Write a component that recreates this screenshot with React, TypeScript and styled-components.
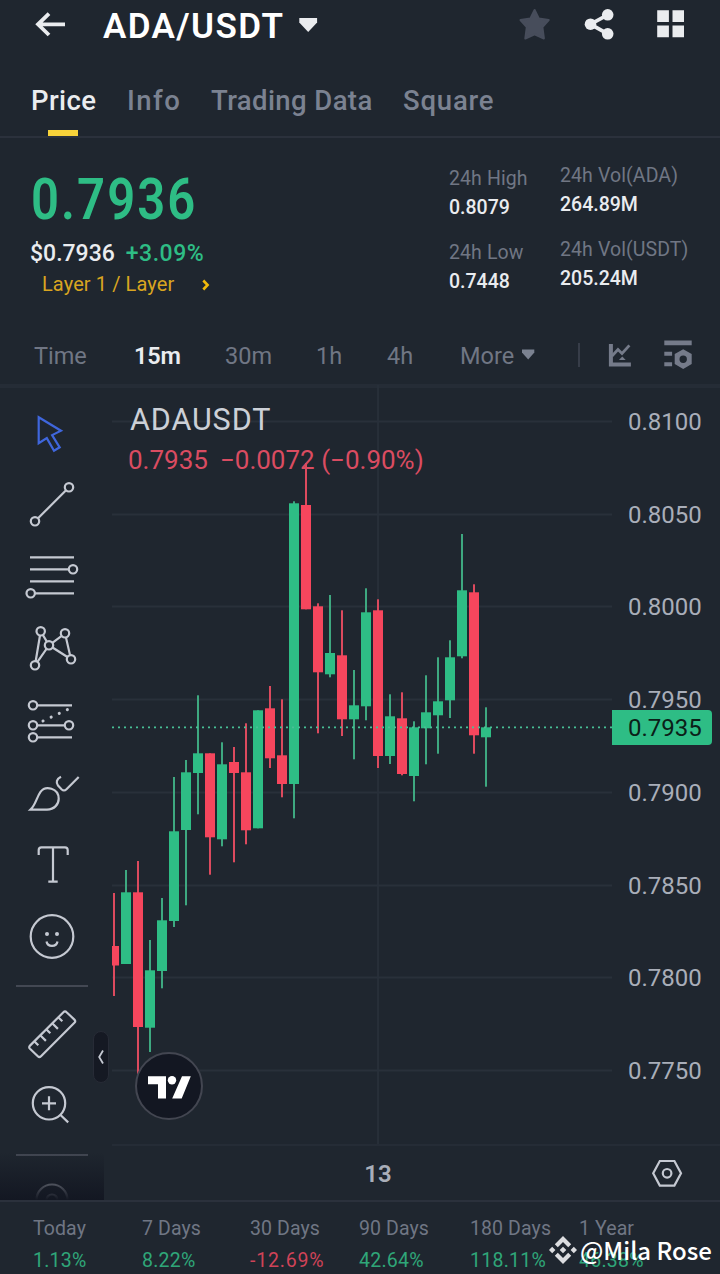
import React from "react";
import styled, { createGlobalStyle } from "styled-components";

const c = {
  bg: "#1f262f",
  line: "#2b313c",
  grid: "#29303a",
  text: "#eaecef",
  muted: "#7b8291",
  dim: "#707684",
  green: "#2ebd85",
  red: "#f6465d",
  yellow: "#f8d33a",
  gold: "#d9a520",
  tool: "#c5c9d2",
  axis: "#a9aeb9",
  deep: "#131722",
};

const GlobalStyle = createGlobalStyle`
  * { box-sizing: border-box; }
  body { margin: 0; background: ${c.bg}; }
`;

const Screen = styled.main`
  width: 720px;
  height: 1274px;
  overflow: hidden;
  position: relative;
  display: flex;
  flex-direction: column;
  background: ${c.bg};
  color: ${c.text};
  font-family: Roboto, "Liberation Sans", sans-serif;
  white-space: nowrap;
`;

const Icon = styled.svg`
  display: block;
  flex: none;
  overflow: visible;
`;

/* ---------- header ---------- */

const Header = styled.header`
  height: 52px;
  flex: none;
  display: flex;
  align-items: center;
  padding: 0 35px;
`;

const BackIcon = styled(Icon)`
  margin-bottom: 4px;
`;

const Pair = styled.h1`
  margin: 2px 13px 0 38px;
  width: 183px;
  font-size: 35px;
  line-height: 50px;
  font-weight: 600;
  color: #fff;
  letter-spacing: 1.4px;
`;

const CaretIcon = styled(Icon)`
  margin-bottom: 3px;
`;

const HeaderActions = styled.div`
  margin-left: auto;
  display: flex;
  align-items: center;
  gap: 35px;
  padding-bottom: 4px;
`;

const ShareIcon = styled(Icon)`
  margin-right: 7px;
`;

const Tabs = styled.nav`
  height: 86px;
  flex: none;
  display: flex;
  align-items: flex-end;
  padding-left: 31px;
  border-bottom: 2px solid ${c.line};
`;

const Tab = styled.div<{ $active?: boolean; $width: number; $ls?: number }>`
  position: relative;
  width: ${(p) => p.$width}px;
  height: 72px;
  line-height: 74px;
  font-size: 27.5px;
  font-weight: 500;
  letter-spacing: ${(p) => p.$ls ?? 0.4}px;
  color: ${(p) => (p.$active ? c.text : c.muted)};
`;

const TabMark = styled.i`
  position: absolute;
  left: 17px;
  bottom: 0;
  width: 30px;
  height: 6px;
  background: ${c.yellow};
`;

/* ---------- price summary ---------- */

const Summary = styled.section`
  height: 188px;
  flex: none;
  display: flex;
  padding: 23px 0 0 31px;
`;

const PriceBlock = styled.div`
  width: 418px;
  padding-top: 8px;
`;

const BigPrice = styled.div`
  height: 62px;
  line-height: 61px;
  font-size: 57px;
  font-weight: 600;
  color: ${c.green};
  letter-spacing: 2.4px;
  transform: scaleX(0.86);
  transform-origin: left center;
`;

const FiatRow = styled.div`
  margin: 8px 0 0 -1px;
  height: 30px;
  display: flex;
  gap: 11px;
  line-height: 30px;
  font-size: 23px;
  font-weight: 500;
`;

const Change = styled.span`
  color: ${c.green};
  letter-spacing: 0.5px;
`;

const Category = styled.div`
  margin-top: 1px;
  padding-left: 11px;
  height: 29px;
  display: flex;
  align-items: center;
  gap: 29px;
  font-size: 20px;
  line-height: 29px;
  color: ${c.gold};
  letter-spacing: 0.1px;
`;

const StatColumn = styled.div<{ $width: number; $top: number }>`
  width: ${(p) => p.$width}px;
  padding-top: ${(p) => p.$top}px;
  display: flex;
  flex-direction: column;
  gap: 16px;
`;

const StatLabel = styled.div`
  height: 29px;
  line-height: 29px;
  font-size: 19.5px;
  letter-spacing: 0.1px;
  color: ${c.dim};
`;

const StatValue = styled.div`
  height: 29px;
  line-height: 29px;
  font-size: 19.5px;
  font-weight: 500;
`;

/* ---------- intervals ---------- */

const Intervals = styled.div`
  height: 62px;
  flex: none;
  display: grid;
  grid-template-columns: 100px 91px 91px 71px 73px 118px 31px 55px 30px;
  align-items: center;
  padding-left: 34px;
  border-bottom: 4px solid #252c36;
`;

const Interval = styled.div<{ $active?: boolean }>`
  display: flex;
  align-items: center;
  gap: 9px;
  padding-top: 3px;
  line-height: 55px;
  font-size: 23.5px;
  font-weight: ${(p) => (p.$active ? 600 : 400)};
  letter-spacing: ${(p) => (p.$active ? -0.2 : 0)}px;
  color: ${(p) => (p.$active ? c.text : c.dim)};
`;

const MoreIcon = styled(Icon)`
  margin: -3px 0 0 -1px;
`;

const Divider = styled.i`
  width: 2px;
  height: 24px;
  background: #373d49;
`;

/* ---------- workspace ---------- */

const Workspace = styled.section`
  height: 812px;
  flex: none;
  display: flex;
  position: relative;
`;

const Toolbar = styled.aside`
  position: relative;
  width: 104px;
  height: 812px;
  overflow: hidden;
  padding: 9px 16px 0;
  display: flex;
  flex-direction: column;
`;

const ToolSlot = styled(Icon)`
  width: 72px;
  height: 72px;
  fill: none;
  stroke-width: 2.2;
`;

const ToolRule = styled.hr`
  flex: none;
  width: 72px;
  height: 2px;
  margin: 11.5px 0;
  border: 0;
  background: #434853;
`;

const ToolbarFade = styled.div`
  position: absolute;
  left: 0;
  right: 0;
  bottom: 0;
  height: 48px;
  background: linear-gradient(rgba(19, 23, 34, 0), ${c.deep});
`;

const ChartColumn = styled.div`
  width: 508px;
  display: flex;
  flex-direction: column;
`;

const Plot = styled(Icon)`
  width: 508px;
  height: 756px;
`;

const TimeAxis = styled.div`
  height: 56px;
  margin-left: 8px;
  border-top: 2px solid #252c36;
  padding-left: 32px;
  text-align: center;
  line-height: 56px;
  font-size: 24px;
  font-weight: 600;
  color: ${c.axis};
`;

const PriceColumn = styled.div`
  width: 108px;
  display: flex;
  flex-direction: column;
`;

const PriceScale = styled.div`
  height: 756px;
  padding: 11px 0 0 16px;
  display: grid;
  grid-auto-rows: 92.73px;
`;

const PriceTick = styled.div`
  font-size: 24px;
  line-height: 46px;
  color: ${c.axis};
`;

const AxisCorner = styled.div`
  height: 56px;
  border-top: 2px solid #252c36;
  padding: 0 0 0 40px;
  display: flex;
  align-items: center;
`;

const LastPrice = styled.div`
  position: absolute;
  left: 612px;
  top: 322px;
  width: 100px;
  height: 35px;
  padding-left: 16px;
  border-radius: 0 4px 4px 0;
  background: ${c.green};
  color: #0b2018;
  font-size: 24px;
  line-height: 36px;
`;

const Legend = styled.div`
  position: absolute;
  left: 128px;
  top: 10px;
`;

const Symbol = styled.div`
  padding-left: 2px;
  height: 41px;
  line-height: 43px;
  font-size: 30.5px;
  letter-spacing: 0.9px;
  color: #ccd0d7;
`;

const LegendChange = styled.div`
  display: flex;
  gap: 12px;
  height: 42px;
  line-height: 43px;
  font-size: 26px;
  color: #da4c61;
`;

const CollapseHandle = styled.div`
  position: absolute;
  left: 93px;
  top: 643px;
  width: 16px;
  height: 52px;
  border-radius: 8px;
  border: 1px solid #272b36;
  background: #151923;
  display: flex;
  align-items: center;
  justify-content: center;
`;

const BrandBadge = styled.div`
  position: absolute;
  left: 135px;
  top: 664px;
  width: 68px;
  height: 68px;
  border-radius: 50%;
  border: 2px solid #434651;
  background: ${c.deep};
  display: flex;
  align-items: center;
  justify-content: center;
  padding-top: 3px;
`;

/* ---------- performance ---------- */

const Performance = styled.footer`
  flex: 1;
  display: grid;
  grid-template-columns: 109px 108px 109px 111px 109px 120px;
  padding: 11px 0 0 33px;
  border-top: 2px solid ${c.line};
`;

const Period = styled.div`
  height: 32px;
  line-height: 32px;
  font-size: 19.5px;
  letter-spacing: 0.1px;
  color: ${c.dim};
`;

const PeriodValue = styled.div<{ $down?: boolean }>`
  height: 32px;
  line-height: 32px;
  font-size: 19.5px;
  letter-spacing: ${(p) => (p.$down ? 0.8 : 0.25)}px;
  color: ${(p) => (p.$down ? "#d04358" : "#2fa679")};
`;

const Credit = styled.div`
  position: absolute;
  left: 549px;
  top: 1231px;
  height: 37px;
  display: flex;
  align-items: center;
  gap: 3px;
  color: #fff;
  font-family: "Noto Sans CJK SC", "Noto Sans", sans-serif;
  font-size: 24px;
  font-weight: 500;
  line-height: 36px;
`;

/* ---------- data ---------- */

// [wick top, body top, body bottom, wick bottom, rising]
const candles: [number, number, number, number, boolean][] = [
  [893, 946, 965.5, 996, false],
  [870, 892.3, 964, 964, true],
  [861, 892.3, 1027, 1074, false],
  [940, 970.3, 1027.7, 1052, true],
  [898, 920.3, 971, 988.3, true],
  [777, 831.3, 921, 927, true],
  [760, 772.3, 830, 905.3, true],
  [695.3, 753.3, 773, 814.3, true],
  [753.3, 753.3, 837.3, 874.7, false],
  [742.3, 764.3, 839.3, 846.3, true],
  [747, 762, 773, 862.3, false],
  [723.3, 772.3, 830.3, 844.3, false],
  [710.3, 710.3, 828.3, 828.3, true],
  [686, 708.3, 758.3, 768, false],
  [699.3, 755.3, 784, 797.3, false],
  [501.3, 503.3, 784, 818.3, true],
  [463, 505, 609.3, 609.3, false],
  [603.3, 606.3, 672.3, 733.3, false],
  [595, 653, 674.3, 677.3, true],
  [610.3, 655.3, 719.3, 736, false],
  [670, 705.3, 719.3, 759.3, true],
  [588.3, 612.3, 706.3, 720.3, true],
  [599.3, 610.3, 756, 768, false],
  [694.3, 716.3, 756, 764, true],
  [692.3, 718.3, 774, 775.3, false],
  [721.3, 727.3, 776, 801.3, true],
  [675.3, 712.3, 728.3, 764.3, true],
  [657.3, 701.3, 715.3, 753.7, true],
  [640.3, 657.3, 700.3, 718, true],
  [534, 590.3, 656.3, 658.3, true],
  [584.3, 592.3, 735.3, 753.7, false],
  [707.3, 727.3, 737.3, 786.7, true],
];

const ticks = ["0.8100", "0.8050", "0.8000", "0.7950", "0.7900", "0.7850", "0.7800", "0.7750"];
const gridLines = [421.5, 514.5, 606.5, 699.5, 792.5, 885.5, 977.5, 1070.5];

const periods: [string, string, boolean?][] = [
  ["Today", "1.13%"],
  ["7 Days", "8.22%"],
  ["30 Days", "-12.69%", true],
  ["90 Days", "42.64%"],
  ["180 Days", "118.11%"],
  ["1 Year", "46.38%"],
];

/* ---------- parts ---------- */

const Stat = ({ label, value }: { label: string; value: string }) => (
  <div>
    <StatLabel>{label}</StatLabel>
    <StatValue>{value}</StatValue>
  </div>
);

const Tool = ({ children, stroke }: { children: React.ReactNode; stroke?: string }) => (
  <ToolSlot viewBox="0 0 72 72">
    <g stroke={stroke ?? c.tool}>{children}</g>
  </ToolSlot>
);

const Node = ({ x, y }: { x: number; y: number }) => <circle cx={x} cy={y} r="4.2" fill={c.bg} />;

const CandlePlot = () => (
  <Plot viewBox="104 388 508 756">
    <g stroke={c.grid} strokeWidth="1.8">
      {gridLines.map((y) => (
        <line key={y} x1="112" x2="612" y1={y} y2={y} />
      ))}
      <line x1="378" x2="378" y1="385" y2="1144" />
    </g>
    <clipPath id="plot-area">
      <rect x="112" y="388" width="500" height="756" />
    </clipPath>
    <g clipPath="url(#plot-area)">
      {candles.map(([high, top, bottom, low, up], i) => {
        const x = 114 + i * 12;
        return (
          <g key={x}>
            <rect x={x - 1} y={high} width="2" height={low - high} fill={up ? "#3ea880" : "#dc4a5e"} />
            <rect x={x - 5} y={top} width="10" height={bottom - top} fill={up ? c.green : c.red} />
          </g>
        );
      })}
    </g>
    <line x1="112" x2="612" y1="727.3" y2="727.3" stroke="#48c096" strokeWidth="1.8" strokeDasharray="2 4" />
  </Plot>
);

export default function App() {
  return (
    <Screen>
      <GlobalStyle />
      <Header>
        <BackIcon width="30" height="24" viewBox="35 12 30 24" fill="none" stroke={c.text} strokeWidth="3.8">
          <path d="M65 24.3H38M49 13.6 38 24.3 49 35" />
        </BackIcon>
        <Pair>ADA/USDT</Pair>
        <CaretIcon width="18" height="14" viewBox="299 16 18 14" fill={c.text}>
          <path d="M299.3 16h17.8v4.4L308.2 30l-8.9-9.6z" />
        </CaretIcon>
        <HeaderActions>
          <Icon width="31" height="32" viewBox="519 8 31 32" fill="#474d5b" stroke="#474d5b" strokeWidth="2" strokeLinejoin="round">
            <path d="M534.6 10l4.3 8.6 9.8 1.4-6.3 7.2 1.5 11.3-9.3-4.2-9.3 4.2 1.5-11.3-6.3-7.2 9.8-1.4z" />
          </Icon>
          <ShareIcon width="30" height="32" viewBox="585 8 30 32" fill={c.text} stroke={c.text}>
            <g stroke="none">
              <circle cx="590.5" cy="24.2" r="5.8" />
              <circle cx="607.7" cy="14.8" r="5.8" />
              <circle cx="607.7" cy="33.8" r="5.8" />
            </g>
            <path d="M607.7 14.8 590.5 24.2l17.2 9.6" fill="none" strokeWidth="3.8" />
          </ShareIcon>
          <Icon width="28" height="28" viewBox="656.5 10.7 28 28" fill={c.text}>
            <path d="M656.7 11h11.7v11.7h-11.7zM672 11h11.5v11.7H672zM656.7 26.3h11.7V38h-11.7zM672 26.3h11.5V38H672z" />
          </Icon>
        </HeaderActions>
      </Header>

      <Tabs>
        <Tab $active $width={96}>
          Price
          <TabMark />
        </Tab>
        <Tab $width={84} $ls={1.5}>
          Info
        </Tab>
        <Tab $width={192}>Trading Data</Tab>
        <Tab $width={120} $ls={0.8}>
          Square
        </Tab>
      </Tabs>

      <Summary>
        <PriceBlock>
          <BigPrice>0.7936</BigPrice>
          <FiatRow>
            <span>$0.7936</span>
            <Change>+3.09%</Change>
          </FiatRow>
          <Category>
            Layer 1 / Layer
            <Icon width="6" height="10" viewBox="0 0 6 10" fill="none" stroke="#f0b90b" strokeWidth="2.6">
              <path d="M.3.5 4.6 5 .3 9.5" />
            </Icon>
          </Category>
        </PriceBlock>
        <StatColumn $width={111} $top={3}>
          <Stat label="24h High" value="0.8079" />
          <Stat label="24h Low" value="0.7448" />
        </StatColumn>
        <StatColumn $width={140} $top={0}>
          <Stat label="24h Vol(ADA)" value="264.89M" />
          <Stat label="24h Vol(USDT)" value="205.24M" />
        </StatColumn>
      </Summary>

      <Intervals>
        <Interval>Time</Interval>
        <Interval $active>15m</Interval>
        <Interval>30m</Interval>
        <Interval>1h</Interval>
        <Interval>4h</Interval>
        <Interval>
          More
          <MoreIcon width="12" height="10" viewBox="0 0 12 10" fill="#7b8291">
            <path d="M0-.5h12.3v3L6.2 9.5 0 2.5z" />
          </MoreIcon>
        </Interval>
        <Divider />
        <Icon width="22" height="22" viewBox="609 343 22 22" fill="none" stroke="#757b8a">
          <path d="M610.9 343v20.4h20" strokeWidth="4" />
          <path d="M612 355l6-6.4 4 3.8 7.4-8" strokeWidth="2.8" />
          <path d="M622.3 355.5l3.4 3.6h-6.8z" fill="#757b8a" stroke="none" />
        </Icon>
        <Icon width="28" height="29" viewBox="664 341.5 28 29" fill="#757b8a">
          <path d="M664.3 341h27.4v4.7h-27.4zM664.3 352.3h7.8v4h-7.8zM664.3 362.7h7.8v4h-7.8z" />
          <path
            fillRule="evenodd"
            d="M683.2 349.8l8.5 4.8v10l-8.5 4.8-8.5-4.8v-10zM683.2 356a3.7 3.7 0 100 7.4 3.7 3.7 0 000-7.4z"
          />
        </Icon>
      </Intervals>

      <Workspace>
        <Toolbar>
          <Tool stroke="#3f66dc">
            <path d="M22.7 20.3 45 33.7l-8.9 4.4 7.6 12.2-5.7 3.4-7.2-12.6-8.1 5.2z" />
          </Tool>
          <Tool>
            <path d="M19 52.3l34-34" />
            <Node x={19} y={52.3} />
            <Node x={53} y={18.3} />
          </Tool>
          <Tool>
            <path d="M14 16.3h44M14 28.3h43M14 40.3h44M14 52.3h44" />
            <Node x={57} y={28.3} />
            <Node x={14.7} y={52.3} />
          </Tool>
          <Tool>
            <path d="M24.7 18.3 19 52.3l14-20zL33 32.3 49 20.3l6 26-22-14" />
            <Node x={24.7} y={18.3} />
            <Node x={49} y={20.3} />
            <Node x={33} y={32.3} />
            <Node x={19} y={52.3} />
            <Node x={55} y={46.3} />
          </Tool>
          <Tool>
            <path d="M17 20.3h39M17 40.3h36M17 52.3h39" />
            <path d="M27 36 51.4 24.6" strokeWidth="3" strokeLinecap="round" strokeDasharray="0.1 8.85" />
            <Node x={17} y={20.3} />
            <Node x={17} y={40.3} />
            <Node x={53} y={40.3} />
            <Node x={17} y={52.3} />
          </Tool>
          <Tool>
            <path d="M14.5 52.6C19.500 48 20.500 40.500 24.500 34.800 29.500 28 42.700 31 42.700 41.700 42.700 47 38.500 52.600 31 52.600z" />
            <path d="M45 19.700C40.500 22 39.700 25.500 42 28.500L45.500 32.200C47 33.700 49 33.700 50.500 32.200L62.700 20" />
          </Tool>
          <Tool>
            <path d="M22.7 26v-5q0-2.700 2.700-2.700h23.600q2.700 0 2.700 2.700v5M37 18.300v34.400M32.300 52.700h9.400" />
          </Tool>
          <Tool>
            <circle cx="36" cy="35.500" r="21.300" />
            <path d="M30.500 40.500c1 5.800 10 5.800 11 0" />
            <g fill={c.tool} stroke="none">
              <circle cx="31" cy="32.900" r="2" />
              <circle cx="41" cy="32.900" r="2" />
            </g>
          </Tool>
          <ToolRule />
          <Tool>
            <path d="M47.400 14.200q1.600-1.600 3.200 0l7.800 7.400q1.600 1.600 0 3.200L25 58.200q-1.600 1.600-3.200 0l-7.800-7.400q-1.600-1.600 0-3.200z" />
            <path d="M42.500 19.500l3.800 3.800M36.500 25.500l5.400 5.400M30.500 31.500l3.800 3.800M24.500 37.500l5.400 5.400M18.500 43.500l3.800 3.800" />
          </Tool>
          <Tool>
            <circle cx="33" cy="33.300" r="16.200" />
            <path d="M26 33.300h14M33 26.300v14M44.500 45l7.700 7.400" />
          </Tool>
          <ToolRule />
          <Tool>
            <circle cx="36" cy="33" r="15.500" />
            <circle cx="36" cy="33" r="5.500" />
          </Tool>
          <ToolbarFade />
        </Toolbar>

        <ChartColumn>
          <CandlePlot />
          <TimeAxis>13</TimeAxis>
        </ChartColumn>

        <PriceColumn>
          <PriceScale>
            {ticks.map((t) => (
              <PriceTick key={t}>{t}</PriceTick>
            ))}
          </PriceScale>
          <AxisCorner>
            <Icon width="30" height="28" viewBox="652 1159 30 28" fill="none" stroke={c.tool} strokeWidth="2.2">
              <path d="M659.8 1161h14.6l6.6 12.3-6.6 12.3h-14.6l-6.6-12.3z" />
              <circle cx="667.1" cy="1173.3" r="4.3" />
            </Icon>
          </AxisCorner>
        </PriceColumn>

        <Legend>
          <Symbol>ADAUSDT</Symbol>
          <LegendChange>
            <span>0.7935</span>
            <span>−0.0072 (−0.90%)</span>
          </LegendChange>
        </Legend>
        <LastPrice>0.7935</LastPrice>
        <CollapseHandle>
          <Icon width="6" height="14" viewBox="0 0 6 14" fill="none" stroke={c.tool} strokeWidth="1.8">
            <path d="M5 .5 1.2 7 5 13.5" />
          </Icon>
        </CollapseHandle>
        <BrandBadge>
          <Icon width="43" height="23" viewBox="148 1076.5 43 23" fill="#fff">
            <path d="M148 1076.7h18v22.3h-8v-14.3h-10zM182 1076.7h8.8l-9.1 22.3h-9.5z" />
            <circle cx="172" cy="1080.8" r="4.2" />
          </Icon>
        </BrandBadge>
      </Workspace>

      <Performance>
        {periods.map(([name, value, down]) => (
          <div key={name}>
            <Period>{name}</Period>
            <PeriodValue $down={down}>{value}</PeriodValue>
          </div>
        ))}
      </Performance>

      <Credit>
        <Icon width="28" height="28" viewBox="-14 -14 28 28" fill="#dcdde0">
          <path d="M0-14 8.2-5.8 5.2-2.8 0-8-5.2-2.8-8.2-5.8zM0 14 8.2 5.8 5.2 2.8 0 8-5.2 2.8-8.2 5.8zM0-3.3 3.3 0 0 3.3-3.3 0zM-10.8-3.2-7.6 0l-3.2 3.2L-14 0zM10.8-3.2 14 0l-3.2 3.2L7.6 0z" />
        </Icon>
        @Mila Rose
      </Credit>
    </Screen>
  );
}
